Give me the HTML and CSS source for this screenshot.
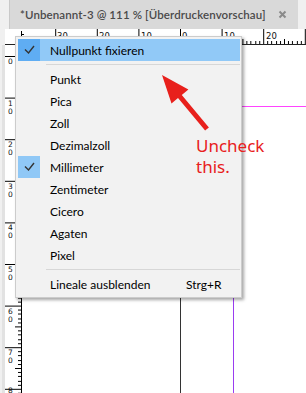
FILE: index.html
```html
<!DOCTYPE html>
<html lang="de">
<head>
<meta charset="UTF-8">
<meta name="viewport" content="width=device-width, initial-scale=1.0">
<title>Lineale</title>
<link rel="stylesheet" href="styles.css">
</head>
<body>
<div class="tabbar">
    <div class="tab">
        <span class="tab-title">*Unbenannt-3 @ 111 % [Überdruckenvorschau]</span>
        <svg class="tab-close" width="9" height="9" viewBox="0 0 9 9">
            <path d="M1.5 1.5L7.5 7.5M7.5 1.5L1.5 7.5" stroke="#8a8a8a" stroke-width="2"/>
        </svg>
    </div>
</div>

<div class="hruler">
    <svg width="306" height="15" shape-rendering="crispEdges">
        <defs>
            <pattern id="hticks" patternUnits="userSpaceOnUse" x="180" y="0" width="41.6" height="15">
                <path d="M0.5 0V15 M4.66 12V15 M8.82 12V15 M12.98 12V15 M17.14 12V15 M21.3 10V15 M25.46 12V15 M29.62 12V15 M33.78 12V15 M37.94 12V15" stroke="#000" stroke-width="1"/>
            </pattern>
        </defs>
        <rect x="21" y="0" width="285" height="15" fill="url(#hticks)"/>
        <path d="M21.5 2V7 M21.5 5H24" stroke="#000"/>
        <g class="rnum">
            <text x="57" y="10">30</text>
            <text x="99" y="10">20</text>
            <text x="141" y="10">10</text>
            <text x="182" y="10">0</text>
            <text x="224" y="10">10</text>
            <text x="266" y="10">20</text>
        </g>
    </svg>
</div>

<div class="work">
    <div class="vruler">
        <svg width="17" height="349" shape-rendering="crispEdges">
            <defs>
                <pattern id="vticks" patternUnits="userSpaceOnUse" x="0" y="11" width="17" height="41.6">
                    <path d="M0 0.5H17 M13 4.66H17 M13 8.82H17 M13 12.98H17 M13 17.14H17 M10 21.3H17 M13 25.46H17 M13 29.62H17 M13 33.78H17 M13 37.94H17" stroke="#000" stroke-width="1"/>
                </pattern>
            </defs>
            <rect x="0" y="0" width="17" height="349" fill="url(#vticks)"/>
            <path d="M16.5 0V349" stroke="#000"/>
            <g class="rnum vnum">
                <text x="3" y="19">0</text>
                <text x="3" y="61">1</text><text x="3" y="69">0</text>
                <text x="3" y="102">2</text><text x="3" y="110">0</text>
                <text x="3" y="144">3</text><text x="3" y="152">0</text>
                <text x="3" y="185">4</text><text x="3" y="193">0</text>
                <text x="3" y="227">5</text><text x="3" y="235">0</text>
                <text x="3" y="269">6</text><text x="3" y="277">0</text>
                <text x="3" y="310">7</text><text x="3" y="318">0</text>
                <text x="3" y="348">8</text>
            </g>
        </svg>
    </div>
    <div class="canvas">
        <div class="guide guide-page"></div>
        <div class="guide guide-purple"></div>
        <div class="guide guide-magenta"></div>
    </div>
</div>

<div class="menu">
    <div class="item item-hover">
        <span class="check">
            <svg width="22" height="22" viewBox="0 0 22 22"><path d="M7 10.5L10.5 14L16 7" fill="none" stroke="#333" stroke-width="1.4"/></svg>
        </span>
        <span class="label">Nullpunkt fixieren</span>
    </div>
    <div class="sep"></div>
    <div class="item"><span class="check"></span><span class="label">Punkt</span></div>
    <div class="item"><span class="check"></span><span class="label">Pica</span></div>
    <div class="item"><span class="check"></span><span class="label">Zoll</span></div>
    <div class="item"><span class="check"></span><span class="label">Dezimalzoll</span></div>
    <div class="item">
        <span class="check check-on">
            <svg width="22" height="22" viewBox="0 0 22 22"><path d="M7 10.5L10.5 14L16 7" fill="none" stroke="#333" stroke-width="1.4"/></svg>
        </span>
        <span class="label">Millimeter</span>
    </div>
    <div class="item"><span class="check"></span><span class="label">Zentimeter</span></div>
    <div class="item"><span class="check"></span><span class="label">Cicero</span></div>
    <div class="item"><span class="check"></span><span class="label">Agaten</span></div>
    <div class="item"><span class="check"></span><span class="label">Pixel</span></div>
    <div class="sep"></div>
    <div class="item">
        <span class="check"></span>
        <span class="label">Lineale ausblenden</span>
        <span class="shortcut">Strg+R</span>
    </div>
</div>

<svg class="arrow" width="306" height="393">
    <polygon points="162,75 188.4,89.5 181.8,94.9 208.9,127.4 205.1,130.6 178,98.1 171.5,103.5" fill="#e8201c"/>
</svg>
<div class="note">Uncheck<br>this.</div>

</body>
</html>
```

FILE: styles.css
```css
body {
    margin: 0;
    width: 306px;
    height: 393px;
    overflow: hidden;
    background-color: #f0f0f0;
    font-family: Lato, "Noto Sans", sans-serif;
    font-size: 12px;
    position: relative;
}

/* Dokument-Tab */
.tabbar {
    height: 29px;
    display: flex;
}

.tab {
    margin-left: 9px;
    width: 289px;
    border-left: 1px solid #c9c9c9;
    background-color: #d9d9d9;
    display: flex;
    align-items: center;
    padding-left: 10px;
    box-sizing: border-box;
    gap: 12px;
}

.tab-title {
    color: #4a4a4a;
    font-size: 11.5px;
    font-weight: 600;
    letter-spacing: 0.1px;
    white-space: nowrap;
}

.tab-close {
    flex: none;
}

/* Lineale */
.hruler {
    height: 15px;
    background-color: #fff;
    border-bottom: 1px solid #222;
    margin-left: 5px;
    overflow: hidden;
}

.hruler svg {
    display: block;
    margin-left: -5px;
}

.rnum text {
    font-family: "DejaVu Sans", sans-serif;
    font-size: 8.5px;
    fill: #111;
}

.vnum text {
    font-size: 7.5px;
}

.work {
    display: flex;
    height: 349px;
}

.vruler {
    width: 17px;
    margin-left: 2px;
    border-left: 3px solid #e2e2e2;
    background-color: #fff;
}

.vruler svg {
    display: block;
}

.canvas {
    flex: 1;
    background-color: #fff;
    position: relative;
}

.guide {
    position: absolute;
}

.guide-page {
    left: 158px;
    top: 0;
    bottom: 0;
    width: 1px;
    background-color: #333;
}

.guide-purple {
    left: 211px;
    top: 0;
    bottom: 0;
    width: 1px;
    background-color: #9a3cf0;
}

.guide-magenta {
    left: 0;
    right: 0;
    top: 61px;
    height: 1px;
    background-color: #ff44ff;
}

/* Kontextmenü */
.menu {
    position: absolute;
    left: 15px;
    top: 36px;
    padding: 2px 1px 2px 2px;
    width: 222px;
    background-color: #f2f2f2;
    border: 1px solid #cccccc;
    box-shadow: 2px 2px 3px rgba(0, 0, 0, 0.35);
}

.item {
    height: 22px;
    display: flex;
    align-items: center;
    color: #000;
}

.item-hover {
    background-color: #91c9f7;
}

.check {
    width: 22px;
    height: 22px;
    flex: none;
    margin-right: 10px;
}

.check svg {
    display: block;
}

.item-hover .check {
    background-color: #5fadf3;
}

.check-on {
    background-color: #90c8f6;
}

.label {
    flex: 1;
    white-space: nowrap;
}

.shortcut {
    width: 54px;
    flex: none;
}

.sep {
    height: 1px;
    background-color: #d7d7d7;
    margin: 3px 0 3px 28px;
}

/* Anmerkung */
.arrow {
    position: absolute;
    left: 0;
    top: 0;
    pointer-events: none;
}

.note {
    position: absolute;
    left: 196px;
    top: 135px;
    color: #e8201c;
    font-family: "Noto Sans", sans-serif;
    font-size: 17px;
    line-height: 21px;
}
```
